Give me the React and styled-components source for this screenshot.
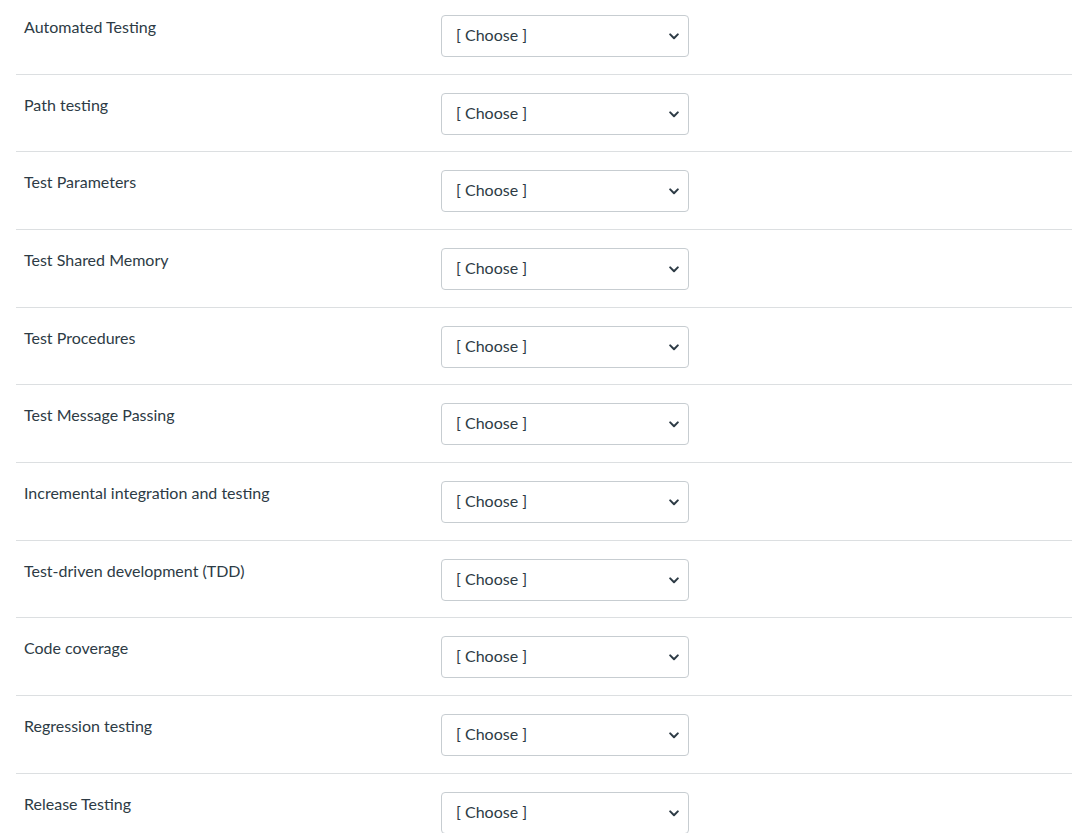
import React from "react";
import styled, { createGlobalStyle } from "styled-components";

const GlobalStyle = createGlobalStyle`
  body {
    margin: 0;
    background: #ffffff;
    font-family: Lato, "Noto Sans", sans-serif;
    color: #2d3b45;
    overflow: hidden;
  }
`;

const items = [
  "Automated Testing",
  "Path testing",
  "Test Parameters",
  "Test Shared Memory",
  "Test Procedures",
  "Test Message Passing",
  "Incremental integration and testing",
  "Test-driven development (TDD)",
  "Code coverage",
  "Regression testing",
  "Release Testing",
];

const Chevron = () => (
  <ChevronIcon width="10" height="7" viewBox="0 0 10 7" aria-hidden="true">
    <path d="M1.2 1.4 L5 5.2 L8.8 1.4" fill="none" stroke="#2d3b45" strokeWidth="2" strokeLinecap="round" strokeLinejoin="round" />
  </ChevronIcon>
);

export default function App() {
  return (
    <>
      <GlobalStyle />
      <List>
        {items.map((label) => (
          <Row key={label}>
            <Label>{label}</Label>
            <SelectWrap>
              <Select defaultValue="">
                <option value="">[ Choose ]</option>
              </Select>
              <Chevron />
            </SelectWrap>
          </Row>
        ))}
      </List>
    </>
  );
}

const List = styled.div`
  margin: -3px 13px 0 16px;
  display: flex;
  flex-direction: column;
`;

const Row = styled.div`
  display: grid;
  grid-template-columns: 425px 248px;
  align-items: start;
  padding: 16px 0 16.67px;
  border-bottom: 1px solid #dcdfe1;
`;

const Label = styled.div`
  padding: 2px 0 0 8px;
  font-size: 16px;
  line-height: 24px;
  color: #2d3b45;
`;

const SelectWrap = styled.div`
  position: relative;
  margin-top: 2px;
  width: 248px;
  height: 42px;
`;

const Select = styled.select`
  appearance: none;
  -webkit-appearance: none;
  width: 100%;
  height: 100%;
  box-sizing: border-box;
  padding: 0 32px 3px 14px;
  border: 1px solid #c7cdd1;
  border-radius: 4px;
  background: #ffffff;
  font-family: Lato, "Noto Sans", sans-serif;
  font-size: 16px;
  color: #2d3b45;
  outline: none;
`;

const ChevronIcon = styled.svg`
  position: absolute;
  right: 10px;
  top: 18px;
  pointer-events: none;
`;
